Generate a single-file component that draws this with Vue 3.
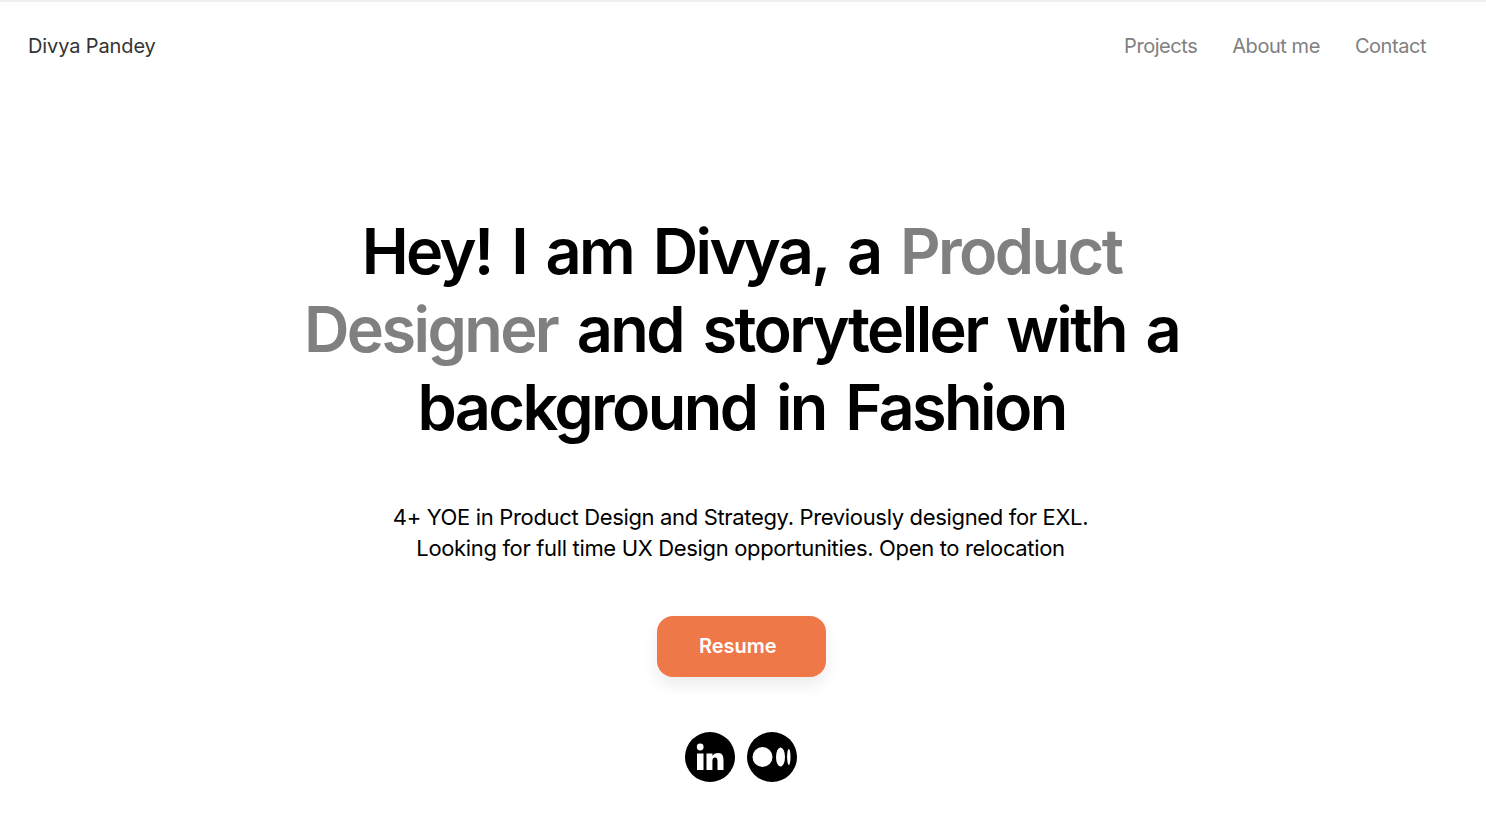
<template>
  <div class="page">
    <header class="top-nav">
      <span class="brand">Divya Pandey</span>
      <nav class="nav-links">
        <a href="#">Projects</a>
        <a href="#">About me</a>
        <a href="#">Contact</a>
      </nav>
    </header>

    <main class="hero">
      <h1 class="headline">
        Hey! I am Divya, a <span class="muted">Product<br />Designer</span> and storyteller with a<br />background in Fashion
      </h1>
      <p class="intro">
        4+ YOE in Product Design and Strategy. Previously designed for EXL.<br />
        Looking for full time UX Design opportunities. Open to relocation
      </p>
      <a href="#" class="resume-btn"><span>Resume</span></a>
      <div class="socials">
        <a href="#" class="social" aria-label="LinkedIn">
          <svg width="50" height="50" viewBox="0 0 50 50">
            <circle cx="25" cy="25" r="25" fill="#000" />
            <circle cx="15.2" cy="15" r="3.4" fill="#fff" />
            <rect x="12" y="21.500" width="6.500" height="16.500" fill="#fff" />
            <path d="M21.500 21.500h6v2.500c1-1.800 3-3 5.400-3 4.800 0 5.600 3.300 5.600 7.600V38h-6v-8.900c0-2.300-.5-3.700-2.400-3.700-2 0-2.700 1.500-2.700 3.700V38h-5.900z" fill="#fff" />
          </svg>
        </a>
        <a href="#" class="social" aria-label="Medium">
          <svg width="50" height="50" viewBox="0 0 50 50">
            <circle cx="25" cy="25" r="25" fill="#000" />
            <ellipse cx="15.500" cy="25" rx="10" ry="10" fill="#fff" />
            <ellipse cx="33.500" cy="25" rx="4.500" ry="9.500" fill="#fff" />
            <ellipse cx="41.800" cy="25" rx="1.700" ry="8" fill="#fff" />
          </svg>
        </a>
      </div>
    </main>
  </div>
</template>

<script setup>
</script>

<style>
html, body {
  margin: 0;
  background: #fff;
}
</style>

<style scoped>
.page {
  min-height: 828px;
  border-top: 2px solid #eeeeee;
  box-sizing: border-box;
  font-family: "Inter", "Liberation Sans", sans-serif;
  color: #000;
  overflow: hidden;
}

.top-nav {
  display: flex;
  justify-content: space-between;
  align-items: center;
  padding: 30px 60px 0 28px;
  font-size: 20px;
  line-height: 28px;
}

.brand {
  color: #333;
  letter-spacing: -0.12px;
}

.nav-links {
  display: flex;
  gap: 35px;
}

.nav-links a {
  color: #808080;
  text-decoration: none;
  letter-spacing: -0.45px;
}

.hero {
  display: flex;
  flex-direction: column;
  align-items: center;
  padding: 152px 3px 0 0;
}

.headline {
  margin: 0;
  text-align: center;
  font-size: 63px;
  line-height: 78px;
  font-weight: 600;
  letter-spacing: -2.6px;
  word-spacing: 6.2px;
}

.muted {
  color: #808080;
}

.intro {
  margin: 56px 2px 0 0;
  text-align: center;
  font-size: 22px;
  line-height: 31px;
  letter-spacing: -0.34px;
}

.resume-btn {
  margin-top: 52px;
  width: 169px;
  height: 61px;
  box-sizing: border-box;
  padding: 0 0 2px 42px;
  display: flex;
  align-items: center;
  background: #ef7849;
  color: #fff;
  border-radius: 16px;
  font-size: 20px;
  font-weight: 600;
  text-decoration: none;
  box-shadow: 0 8px 16px rgba(0, 0, 0, 0.08);
}

.socials {
  margin: 55px 2px 0 0;
  display: flex;
  gap: 12px;
}

.social {
  display: block;
  width: 50px;
  height: 50px;
}
</style>
